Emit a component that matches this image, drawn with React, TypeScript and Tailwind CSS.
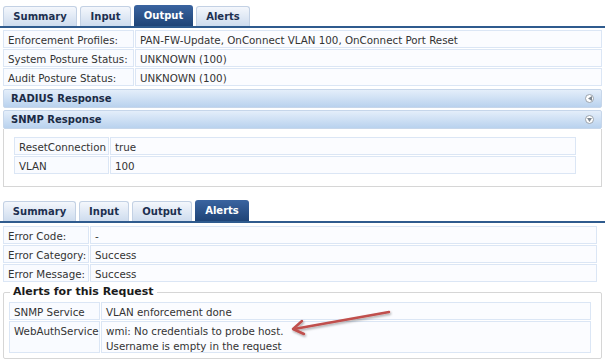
import React from 'react';

const font = { fontFamily: '"DejaVu Sans", Verdana, sans-serif' };

function Tabs({ active, widths }: { active: string; widths: number[] }) {
  const names = ['Summary', 'Input', 'Output', 'Alerts'];
  return (
    <div className="flex items-end gap-[3px] pl-[3px] border-b-2 border-[#2f5b8e]">
      {names.map((n, i) => (
        <div
          key={n}
          style={{ width: widths[i] }}
          className={
            n === active
              ? 'h-[21px] flex items-center justify-center rounded-t-[3px] bg-gradient-to-b from-[#3a64a0] to-[#1f4477] text-white font-bold text-[10px]'
              : 'h-[20px] flex items-center justify-center rounded-t-[3px] border border-b-0 border-[#c3d1e4] bg-gradient-to-b from-[#f4f7fc] to-[#cedcee] text-[#1d3050] font-bold text-[10px]'
          }
        >
          {n}
        </div>
      ))}
    </div>
  );
}

function Row({ label, value, labelW, h = 'h-[18px]' }: { label: string; value: React.ReactNode; labelW: number; h?: string }) {
  return (
    <div className="flex gap-[1px] whitespace-nowrap">
      <div style={{ width: labelW }} className={`${h} shrink-0 flex items-start pt-[2px] px-[4px] border border-[#dbe6f5] bg-[#f9fbff] text-[#333]`}>
        {label}
      </div>
      <div className={`${h} flex-1 flex flex-col justify-start pt-[2px] px-[4px] border border-[#dbe6f5] bg-[#fbfcff] text-[#333] leading-[15px]`}>
        {value}
      </div>
    </div>
  );
}

function Accordion({ title, open }: { title: string; open?: boolean }) {
  return (
    <div className="h-[19px] flex items-center justify-between px-[7px] border border-[#c6d6ea] bg-gradient-to-b from-[#e4eefa] to-[#b9d2ee] rounded-[2px]">
      <span className="font-bold text-[10px] text-[#1b2a45]">{title}</span>
      <span className="w-[9px] h-[9px] rounded-full border border-[#9aa3ad] bg-white flex items-center justify-center">
        {open ? (
          <svg width="5" height="4" viewBox="0 0 5 4"><path d="M0 0 L5 0 L2.5 4 Z" fill="#7d8791" /></svg>
        ) : (
          <svg width="4" height="5" viewBox="0 0 4 5"><path d="M4 0 L4 5 L0 2.5 Z" fill="#7d8791" /></svg>
        )}
      </span>
    </div>
  );
}

export default function App() {
  return (
    <div style={font} className="w-[605px] h-[359px] bg-white text-[10.3px] leading-[14px] relative overflow-hidden">
      <div className="pt-[5px]">
        <Tabs active="Output" widths={[74, 51, 59, 54]} />
        <div className="px-[3px] pt-[2px] flex flex-col gap-[1px]">
          <Row label="Enforcement Profiles:" value="PAN-FW-Update, OnConnect VLAN 100, OnConnect Port Reset" labelW={131} />
          <Row label="System Posture Status:" value="UNKNOWN (100)" labelW={131} />
          <Row label="Audit Posture Status:" value="UNKNOWN (100)" labelW={131} />
        </div>
        <div className="px-[3px] pt-[3px] flex flex-col gap-[2px]">
          <Accordion title="RADIUS Response" />
          <div>
            <Accordion title="SNMP Response" open />
            <div className="border border-t-0 border-[#d6d6d6] pt-[8px] pb-[12px] pl-[10px] pr-[25px] flex flex-col gap-[1px]">
              <Row label="ResetConnection" value="true" labelW={95} />
              <Row label="VLAN" value="100" labelW={95} />
            </div>
          </div>
        </div>
      </div>

      <div className="pt-[13px]">
        <Tabs active="Alerts" widths={[73, 50, 60, 54]} />
        <div className="pl-[3px] pr-[8px] pt-[3px] flex flex-col gap-[1px]">
          <Row label="Error Code:" value="-" labelW={86} />
          <Row label="Error Category:" value="Success" labelW={86} />
          <Row label="Error Message:" value="Success" labelW={86} />
        </div>
        <div className="mx-[3px] mt-[10px] border border-[#d6d6d6] rounded-[2px] pl-[5px] pr-[10px] pb-[5px] relative">
          <div className="absolute -top-[8px] left-[6px] bg-white px-[3px] font-bold text-[11px] text-[#1b1b1b]">Alerts for this Request</div>
          <div className="pt-[9px] flex flex-col gap-[1px]">
            <Row label="SNMP Service" value="VLAN enforcement done" labelW={91} />
            <Row
              label="WebAuthService"
              labelW={91}
              h="h-[32px]"
              value={
                <>
                  <span>wmi: No credentials to probe host.</span>
                  <span>Username is empty in the request</span>
                </>
              }
            />
          </div>
        </div>
      </div>

      <svg className="absolute left-0 top-0 pointer-events-none" width="605" height="359">
        <defs>
          <filter id="sh" x="-10%" y="-50%" width="120%" height="200%">
            <feDropShadow dx="1" dy="1.5" stdDeviation="1" floodColor="#000" floodOpacity="0.35" />
          </filter>
        </defs>
        <g filter="url(#sh)" stroke="#c0504d" strokeWidth="2.5" fill="none" strokeLinecap="round">
          <path d="M389 312 L294 329" />
          <path d="M302 321 L293 329 L304 334" strokeLinejoin="round" />
        </g>
      </svg>
    </div>
  );
}
